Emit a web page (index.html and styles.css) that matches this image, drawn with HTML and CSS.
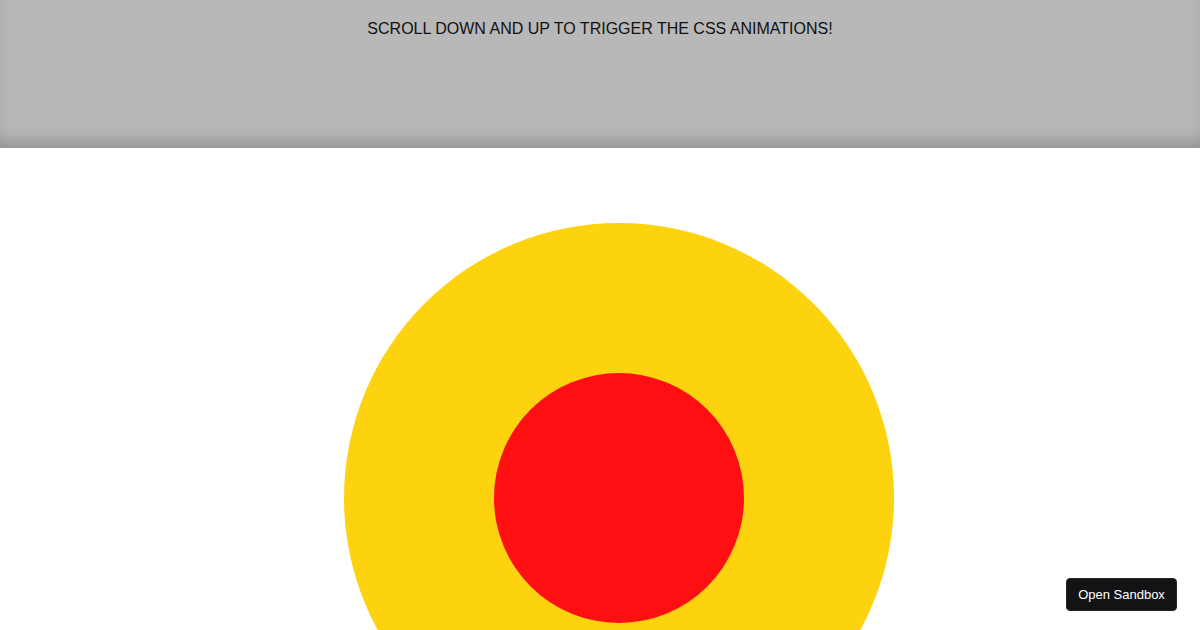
FILE: index.html
```html
<!DOCTYPE html>
<html>
<head>
<meta charset="utf-8">
<link rel="stylesheet" href="styles.css">
</head>
<body>
<header class="top">
  <p class="hint">SCROLL DOWN AND UP TO TRIGGER THE CSS ANIMATIONS!</p>
</header>
<main class="stage">
  <div class="outer">
    <div class="inner"></div>
  </div>
</main>
<a class="sandbox" href="#">Open Sandbox</a>
</body>
</html>
```
FILE: styles.css
```css
html, body {
  margin: 0;
  padding: 0;
  height: 100%;
  overflow: hidden;
  background: #ffffff;
  font-family: "Liberation Sans", Arial, sans-serif;
}
.top {
  height: 148px;
  background: #b8b8b8;
  box-shadow: inset 0 -14px 18px -8px rgba(0, 0, 0, 0.22);
  display: flex;
  justify-content: center;
}
.hint {
  margin: 20px 0 0;
  font-size: 16px;
  line-height: 18px;
  color: #111;
}
.stage {
  display: flex;
  justify-content: center;
  padding-top: 75px;
  padding-left: 38px;
}
.outer {
  width: 550px;
  height: 550px;
  border-radius: 50%;
  background: #fdd20f;
  display: flex;
  align-items: center;
  justify-content: center;
}
.inner {
  width: 250px;
  height: 250px;
  border-radius: 50%;
  background: #fe0f12;
}
.sandbox {
  position: fixed;
  right: 23px;
  bottom: 19px;
  width: 111px;
  height: 33px;
  box-sizing: border-box;
  background: #131316;
  color: #fff;
  border-radius: 4px;
  font-size: 13px;
  display: flex;
  align-items: center;
  justify-content: center;
  text-decoration: none;
  border: 1px solid #2a2320;
}
```
